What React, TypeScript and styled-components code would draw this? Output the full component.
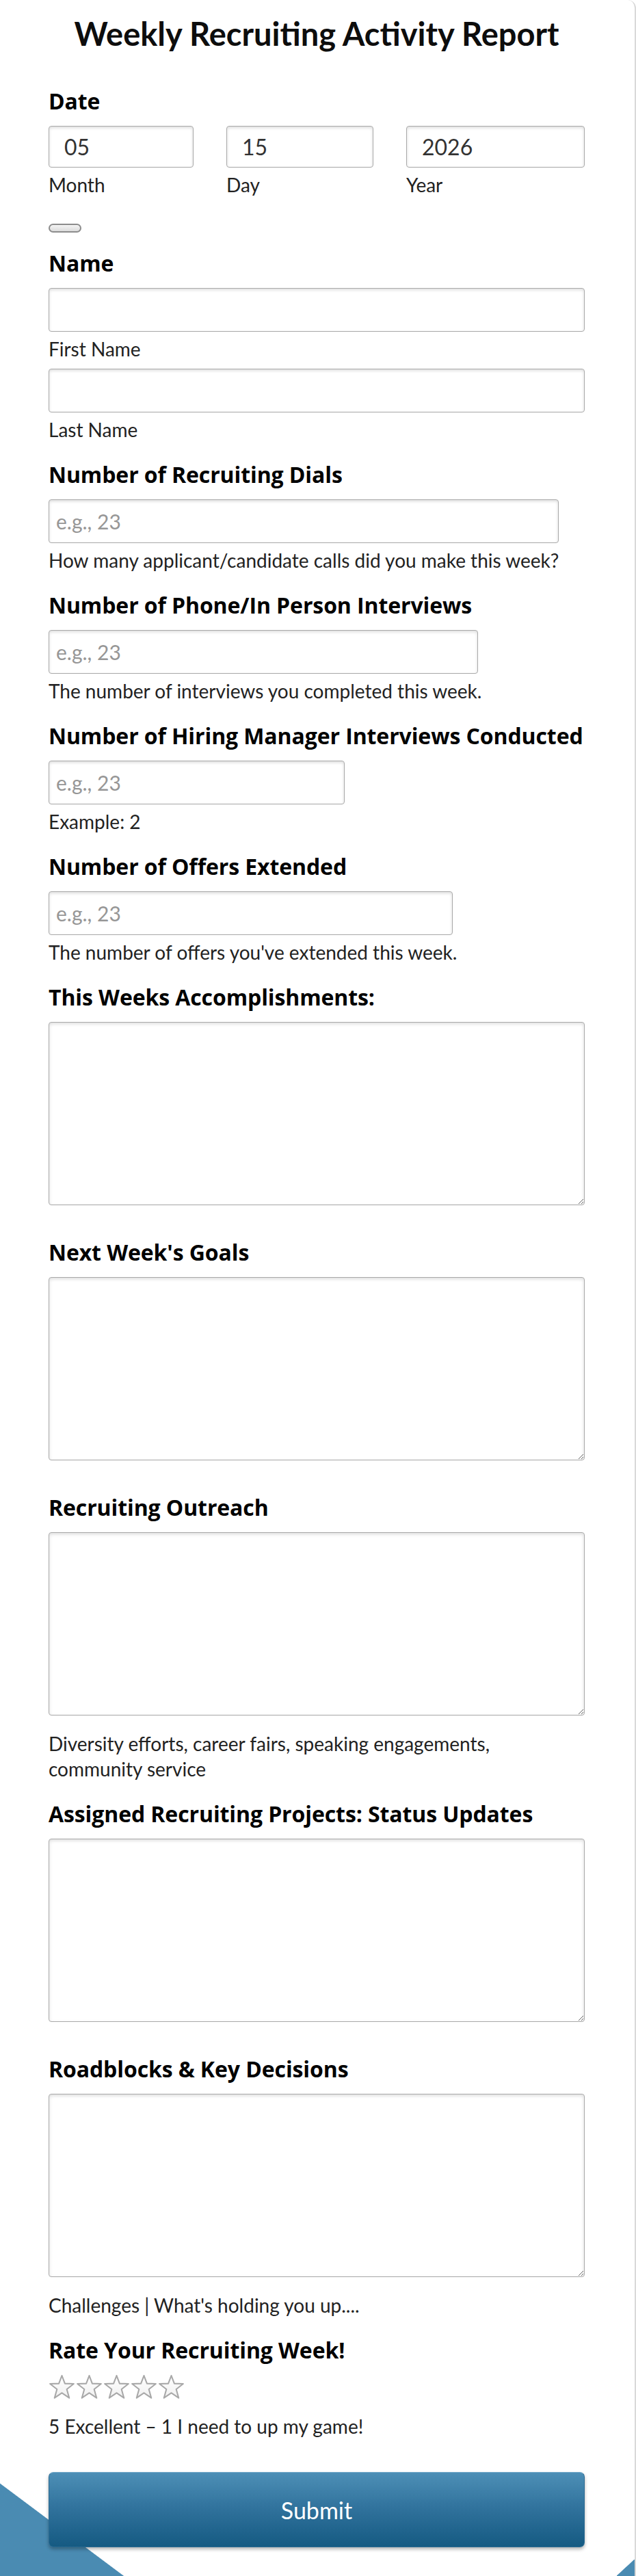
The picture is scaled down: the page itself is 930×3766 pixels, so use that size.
import styled, { createGlobalStyle } from "styled-components";

const GlobalStyle = createGlobalStyle`
  * {
    box-sizing: border-box;
  }
  body {
    margin: 0;
    background: #fff;
    font-family: Lato, "Noto Sans", sans-serif;
  }
`;

const Card = styled.form`
  width: 930px;
  min-height: 3766px;
  padding: 20px 73px 40px 71px;
  border-right: 2px solid #d9d9d9;
  border-top-right-radius: 12px;
  background:
    linear-gradient(
        to top right,
        #4a8bb2 calc(50% - 1px),
        rgba(255, 255, 255, 0.7) 50%,
        rgba(255, 255, 255, 0) calc(50% + 4px)
      )
      left bottom / 182px 136px no-repeat,
    linear-gradient(to bottom right, transparent calc(50% - 1px), #4a8bb2 50%)
      right bottom / 26px 24px no-repeat,
    #fff;
`;

const Title = styled.h1`
  margin: 0 0 51px;
  font-size: 47px;
  line-height: 58px;
  font-weight: 700;
  color: #0d0d0d;
  text-align: center;
`;

const Field = styled.div`
  margin-bottom: 28px;
`;

const Label = styled.label`
  display: block;
  margin-bottom: 17px;
  font-family: "Open Sans", Lato, sans-serif;
  font-size: 32px;
  line-height: 38px;
  font-weight: 700;
  letter-spacing: -0.1px;
  color: #000;
`;

const TextInput = styled.input<{ $width?: number }>`
  display: block;
  width: ${(p) => (p.$width ? `${p.$width}px` : "100%")};
  height: 64px;
  padding: 0 10px;
  border: 1px solid #a9a9a9;
  border-radius: 4px;
  box-shadow: inset 0 2px 4px rgba(0, 0, 0, 0.14);
  font-family: inherit;
  font-size: 30px;
  color: #333;
  background: #fff;
  &::placeholder {
    color: #969696;
  }
`;

const Help = styled.div<{ $gap?: number }>`
  margin-top: ${(p) => p.$gap ?? 7}px;
  font-size: 28px;
  line-height: 37px;
  color: #222;
`;

const Gap = styled.div`
  height: 10px;
`;

const DateRow = styled.div`
  display: grid;
  grid-template-columns: 212px 215px 1fr;
  column-gap: 48px;
`;

const DateInput = styled(TextInput)`
  height: 61px;
  padding-left: 22px;
  font-size: 32px;
`;

const ClearButton = styled.button`
  display: block;
  width: 48px;
  height: 13px;
  padding: 0;
  margin: 0 0 26px;
  border: 2px solid #8c8c8c;
  border-radius: 7px;
  background: linear-gradient(#f4f4f4, #dcdcdc);
`;

const TextArea = styled.textarea`
  display: block;
  width: 100%;
  height: 268px;
  margin: 0;
  border: 1px solid #a9a9a9;
  border-radius: 4px;
  box-shadow: inset 0 2px 5px rgba(0, 0, 0, 0.14);
  font-family: inherit;
  font-size: 28px;
  background: #fff;
`;

const TextAreaField = styled(Field)<{ $hasHelp?: boolean }>`
  margin-bottom: ${(p) => (p.$hasHelp ? "28px" : "50px")};
`;

const Stars = styled.div`
  display: flex;
  gap: 1px;
  margin-top: -1px;
  margin-bottom: 19px;
`;

const StarIcon = styled.svg`
  width: 39px;
  height: 39px;
  display: block;
`;

const SubmitButton = styled.button`
  display: block;
  width: 100%;
  height: 110px;
  margin-top: 48px;
  border: 1px solid #2c6b92;
  border-top-color: #6aa4c6;
  border-radius: 7px;
  background: linear-gradient(#4d8fb6, #2f719b 50%, #155a82);
  box-shadow: 0 3px 5px rgba(0, 0, 0, 0.3);
  color: #fff;
  font-family: inherit;
  font-size: 34px;
  cursor: pointer;
`;

function Star() {
  return (
    <StarIcon viewBox="0 0 38 38">
      <defs>
        <linearGradient id="starFill" x1="0" y1="0" x2="0" y2="1">
          <stop offset="0" stopColor="#ffffff" />
          <stop offset="1" stopColor="#f0f0f0" />
        </linearGradient>
      </defs>
      <polygon
        points="19,2 23.3,13.3 35.9,13.6 26,21.4 29.5,33.8 19,26.6 8.5,33.8 12,21.4 2.1,13.6 14.7,13.3"
        fill="url(#starFill)"
        stroke="#a8a8a8"
        strokeWidth="2"
        strokeLinejoin="round"
      />
    </StarIcon>
  );
}

interface NumberFieldProps {
  label: string;
  help: string;
  width: number;
}

function NumberField({ label, help, width }: NumberFieldProps) {
  return (
    <Field>
      <Label>{label}</Label>
      <TextInput type="text" placeholder="e.g., 23" $width={width} />
      <Help>{help}</Help>
    </Field>
  );
}

function LongField({ label, help }: { label: string; help?: string }) {
  return (
    <TextAreaField $hasHelp={!!help}>
      <Label>{label}</Label>
      <TextArea />
      {help && <Help $gap={23}>{help}</Help>}
    </TextAreaField>
  );
}

export default function App() {
  return (
    <>
      <GlobalStyle />
      <Card onSubmit={(e) => e.preventDefault()}>
        <Title>Weekly Recruiting Activity Report</Title>

        <Field style={{ marginBottom: 38 }}>
          <Label>Date</Label>
          <DateRow>
            <div>
              <DateInput type="text" defaultValue="05" />
              <Help>Month</Help>
            </div>
            <div>
              <DateInput type="text" defaultValue="15" />
              <Help>Day</Help>
            </div>
            <div>
              <DateInput type="text" defaultValue="2026" />
              <Help>Year</Help>
            </div>
          </DateRow>
        </Field>
        <ClearButton type="button" aria-label="Clear date" />

        <Field>
          <Label>Name</Label>
          <TextInput type="text" />
          <Help>First Name</Help>
          <Gap />
          <TextInput type="text" />
          <Help>Last Name</Help>
        </Field>

        <NumberField
          label="Number of Recruiting Dials"
          help="How many applicant/candidate calls did you make this week?"
          width={746}
        />
        <NumberField
          label="Number of Phone/In Person Interviews"
          help="The number of interviews you completed this week."
          width={628}
        />
        <NumberField
          label="Number of Hiring Manager Interviews Conducted"
          help="Example: 2"
          width={433}
        />
        <NumberField
          label="Number of Offers Extended"
          help="The number of offers you've extended this week."
          width={591}
        />

        <LongField label="This Weeks Accomplishments:" />
        <LongField label="Next Week's Goals" />
        <LongField
          label="Recruiting Outreach"
          help="Diversity efforts, career fairs, speaking engagements, community service"
        />
        <LongField label="Assigned Recruiting Projects: Status Updates" />
        <LongField
          label="Roadblocks & Key Decisions"
          help="Challenges | What's holding you up...."
        />

        <Field style={{ marginBottom: 0 }}>
          <Label>Rate Your Recruiting Week!</Label>
          <Stars>
            {[1, 2, 3, 4, 5].map((n) => (
              <Star key={n} />
            ))}
          </Stars>
          <Help $gap={0}>5 Excellent – 1 I need to up my game!</Help>
        </Field>

        <SubmitButton type="submit">Submit</SubmitButton>
      </Card>
    </>
  );
}
